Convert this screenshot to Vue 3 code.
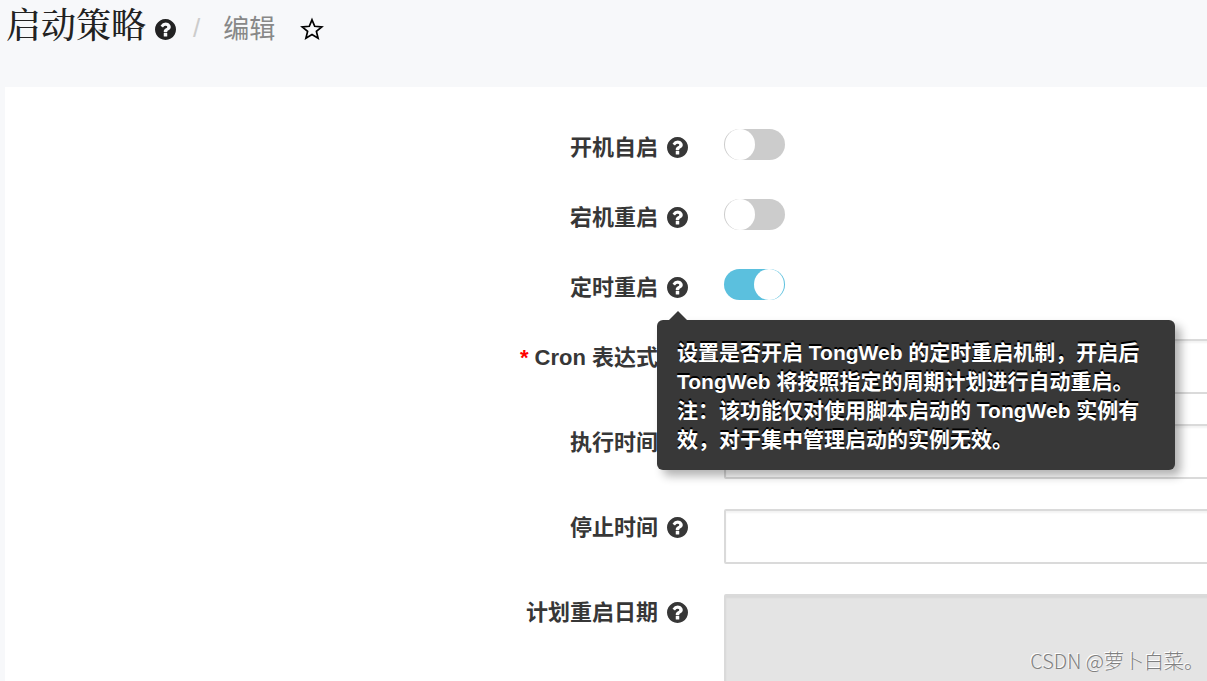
<script setup>
import { ref } from 'vue'

const rows = ref([
  { id: 'boot', label: '开机自启', type: 'switch', value: false },
  { id: 'crash', label: '宕机重启', type: 'switch', value: false },
  { id: 'timed', label: '定时重启', type: 'switch', value: true, tip: true },
  { id: 'cron', label: 'Cron 表达式', type: 'text', value: '', required: true },
  { id: 'start', label: '执行时间', type: 'text', value: '' },
  { id: 'stop', label: '停止时间', type: 'text', value: '' },
  { id: 'dates', label: '计划重启日期', type: 'multiline', value: '' },
])

const helpPath =
  'M1024 1376v-192q0-14-9-23t-23-9h-192q-14 0-23 9t-9 23v192q0 14 9 23t23 9h192q14 0 23-9t9-23zM1280 704q0-88-55.5-163t-138.5-116-170-41q-243 0-371 213-15 24 8 42l132 100q7 6 19 6 16 0 25-12 53-68 86-92 34-24 86-24 48 0 85.5 26t37.5 59q0 38-20 61t-68 45q-63 28-115.5 86.5t-52.5 125.5v36q0 14 9 23t23 9h192q14 0 23-9t9-23q0-19 21.5-49.5t54.5-49.5q32-18 49-28.5t46-35 44.5-48 28-60.500 12.5-81zM1664 896q0 209-103 385.500t-279.500 279.500-385.500 103-385.500-103-279.500-279.500-103-385.500 103-385.500 279.500-279.500 385.500-103 385.500 103 279.500 279.500 103 385.500z'
</script>

<template>
  <div class="page">
    <header class="head">
      <h1 class="title">启动策略</h1>
      <button class="icon-btn" type="button" aria-label="帮助">
        <svg class="help" viewBox="128 128 1536 1536"><path :d="helpPath" /></svg>
      </button>
      <span class="slash">/</span>
      <span class="crumb">编辑</span>
      <button class="icon-btn" type="button" aria-label="收藏">
        <svg class="star" viewBox="0 0 24 24">
          <path d="M12 2.800L14.700 9.300L21.800 9.900L16.400 14.400L18.100 21.300L12 17.600L5.900 21.300L7.600 14.400L2.200 9.900L9.300 9.300Z" />
        </svg>
      </button>
    </header>

    <form class="panel">
      <div v-for="row in rows" :key="row.id" class="row" :class="row.type">
        <div class="name">
          <span v-if="row.required" class="star-mark">*</span>
          <label :for="row.id">{{ row.label }}</label>
          <span class="anchor">
            <button class="icon-btn" type="button" :aria-label="row.label + '说明'">
              <svg class="help" viewBox="128 128 1536 1536"><path :d="helpPath" /></svg>
            </button>
            <span v-if="row.tip" class="tip" role="tooltip">设置是否开启 TongWeb 的定时重启机制，开启后 TongWeb 将按照指定的周期计划进行自动重启。<br>注：该功能仅对使用脚本启动的 TongWeb 实例有效，对于集中管理启动的实例无效。</span>
          </span>
        </div>
        <div class="field">
          <input v-if="row.type === 'switch'" :id="row.id" v-model="row.value" class="toggle" type="checkbox">
          <input v-else-if="row.type === 'text'" :id="row.id" v-model="row.value" class="box" type="text">
          <textarea v-else :id="row.id" v-model="row.value" class="box area" readonly></textarea>
        </div>
      </div>
    </form>

    <div class="mark">CSDN @萝卜白菜。</div>
  </div>
</template>

<style>
body {
  margin: 0;
}
</style>

<style scoped>
.page {
  position: relative;
  display: flex;
  flex-direction: column;
  height: 100vh;
  overflow: hidden;
  background: #f7f8fa;
  color: #373737;
  font-family: "Liberation Sans", "Noto Sans CJK SC", sans-serif;
}

.head {
  display: flex;
  align-items: center;
  flex: none;
  height: 58px;
  margin-bottom: 29px;
  padding-left: 6px;
}

.title {
  margin: 0 9px 4px 0;
  color: #222;
  font: 500 35px/50px "Liberation Serif", "Noto Serif CJK SC", serif;
}

.head .help {
  fill: #222;
}

.slash {
  margin: 0 23px 2px 17px;
  color: #ccc;
  font-size: 26px;
}

.crumb {
  margin: 0 25px 6px 0;
  color: #888;
  font-size: 26px;
}

.icon-btn {
  display: block;
  padding: 0;
  border: 0;
  background: none;
}

.help {
  display: block;
  width: 21px;
  height: 21px;
  fill: #373737;
}

.star {
  display: block;
  width: 24px;
  height: 24px;
  fill: none;
  stroke: #000;
  stroke-width: 1.700;
}

.panel {
  flex: none;
  margin-left: 5px;
  padding-top: 42px;
  background: #fff;
}

.row {
  display: grid;
  grid-template-columns: 683fr 483fr;
  column-gap: 36px;
  height: 55px;
  margin-bottom: 30px;
}

.row.switch {
  height: 40px;
}

.row.multiline {
  height: 160px;
}

.name {
  display: flex;
  align-items: center;
  justify-content: flex-end;
  height: 37px;
  font-size: 22px;
  font-weight: 700;
  line-height: 32px;
  white-space: nowrap;
}

.star-mark {
  margin-right: 6px;
  color: #f00;
}

.anchor {
  position: relative;
  margin-left: 9px;
}

.tip {
  position: absolute;
  z-index: 2;
  top: 43px;
  left: -10px;
  box-sizing: border-box;
  width: 518px;
  padding: 18px 20px 16px;
  border-radius: 6px;
  background: #383838;
  box-shadow: 6px 6px 10px rgba(0, 0, 0, 0.3);
  color: #fff;
  font-size: 21px;
  line-height: 29px;
  text-shadow: 0 -2px 0 #000;
  white-space: normal;
}

.tip::before {
  content: "";
  position: absolute;
  top: -9px;
  left: 11px;
  border: solid transparent;
  border-width: 0 10px 10px;
  border-bottom-color: #383838;
}

.field {
  min-width: 0;
}

.toggle {
  display: block;
  appearance: none;
  box-sizing: border-box;
  width: 61px;
  height: 31px;
  margin: 0;
  padding: 0 1px;
  border-radius: 16px;
  background: #ccc;
}

.toggle::before {
  content: "";
  display: block;
  width: 30px;
  height: 31px;
  border-radius: 50%;
  background: #fff;
}

.toggle:checked {
  background: #5bc0de;
}

.toggle:checked::before {
  margin-left: auto;
}

.box {
  display: block;
  box-sizing: border-box;
  width: calc(100% + 20px);
  height: 55px;
  margin: 0;
  padding: 8px 16px;
  border: 2px solid #dadada;
  border-radius: 2px;
  background: #fff;
  box-shadow: inset 0 2px 2px rgba(0, 0, 0, 0.05);
  font: inherit;
}

.area {
  height: 160px;
  background: #e4e4e4;
  resize: none;
}

.mark {
  position: absolute;
  right: 3px;
  bottom: 6px;
  color: #808080;
  font-family: "Noto Sans CJK SC", sans-serif;
  font-size: 20px;
  font-weight: 300;
  line-height: 28px;
  text-shadow: -1px -1px 0 #fff;
}
</style>
